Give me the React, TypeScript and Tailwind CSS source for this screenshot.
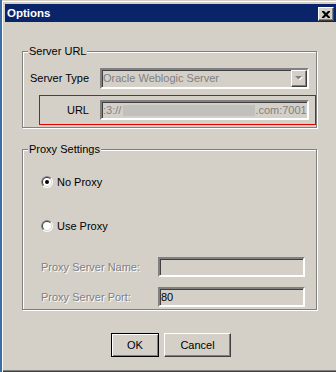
import React from 'react';

function CloseGlyph() {
  return (
    <svg width="8" height="7" viewBox="0 0 8 7" className="block">
      <path d="M0 0h2l2 2 2-2h2v1L5.5 3.5 8 6v1H6L4 5 2 7H0V6l2.5-2.5L0 1z" fill="#000" />
    </svg>
  );
}

function Radio({ checked }: { checked?: boolean }) {
  return (
    <svg width="12" height="12" viewBox="0 0 12 12" className="block shrink-0">
      <defs>
        <clipPath id="radio-tl">
          <polygon points="0,0 12,0 0,12" />
        </clipPath>
      </defs>
      <circle cx="6" cy="6" r="6" fill="#fff" />
      <circle cx="6" cy="6" r="6" fill="#808080" clipPath="url(#radio-tl)" />
      <circle cx="6" cy="6" r="5" fill="#d4d0c8" />
      <circle cx="6" cy="6" r="5" fill="#404040" clipPath="url(#radio-tl)" />
      <circle cx="6" cy="6" r="4" fill="#fff" />
      {checked && <circle cx="6" cy="6" r="2" fill="#000" />}
    </svg>
  );
}

function DropArrow() {
  return (
    <svg width="8" height="5" viewBox="0 0 8 5" className="block">
      <polygon points="1,1 8,1 4.5,4.5" fill="#fff" />
      <polygon points="0,0 7,0 3.5,3.5" fill="#808080" />
    </svg>
  );
}

const sunken =
  'border-2 border-t-[#808080] border-l-[#808080] border-b-white border-r-white bg-[#d4d0c8] shadow-[inset_1px_1px_0_#404040,inset_-1px_-1px_0_#d4d0c8]';

function GroupBox({ title, className, children }: { title: string; className: string; children: React.ReactNode }) {
  return (
    <div className={`relative ml-[17px] w-[295px] border border-[#808080] shadow-[inset_1px_1px_0_#fff,1px_1px_0_#fff] ${className}`}>
      <span className="absolute -top-[7px] left-[5px] bg-[#d4d0c8] px-[1px] leading-[13px]">{title}</span>
      {children}
    </div>
  );
}

export default function App() {
  return (
    <div className="h-[372px] w-[336px] overflow-hidden bg-[#3a6ea5] pl-[2px] font-['Liberation_Sans',Arial,sans-serif] text-[11px] leading-[13px] text-black">
      <div className="flex h-full flex-col bg-[#d4d0c8] pl-[3px] pt-[4px] shadow-[inset_0_1px_0_#d4d0c8,inset_0_2px_0_#fff,inset_1px_0_0_#fff,inset_0_-1px_0_#404040,inset_0_-2px_0_#808080]">
        {/* title bar */}
        <div className="flex h-[18px] items-start justify-between bg-[#0a246a] pl-[2px] pr-[2px]">
          <span className="self-center text-[11.5px] font-bold text-white">Options</span>
          <div className="mt-[3px] flex h-[14px] w-[16px] items-center justify-center border border-t-white border-l-white border-b-[#404040] border-r-[#404040] bg-[#d4d0c8] shadow-[inset_-1px_-1px_0_#808080]">
            <CloseGlyph />
          </div>
        </div>

        {/* Server URL */}
        <GroupBox title="Server URL" className="mt-[29px] h-[77px]">
          <div className="ml-[7px] mt-[16px] flex items-center">
            <span className="w-[70px]">Server Type</span>
            <div className={`flex h-[21px] w-[209px] items-center ${sunken}`}>
              <span className="flex-1 pl-[1px] text-[#808080]">Oracle Weblogic Server</span>
              <div className="flex h-full w-[16px] items-center justify-center border border-t-white border-l-white border-b-[#404040] border-r-[#404040] shadow-[inset_-1px_-1px_0_#808080]">
                <DropArrow />
              </div>
            </div>
          </div>
          <div className="ml-[16px] mt-[6px] flex h-[30px] w-[277px] items-center border border-[#e00000]">
            <span className="w-[60px] pr-[11px] text-right">URL</span>
            <div className={`flex h-[20px] w-[209px] items-center overflow-hidden whitespace-nowrap pl-[1px] text-[#808080] ${sunken}`}>
              <span>:3://</span>
              <span className="ml-[2px] inline-block h-[11px] w-[132px] shrink-0 bg-[#c2c0bc]" />
              <span>.com:7001</span>
            </div>
          </div>
        </GroupBox>

        {/* Proxy Settings */}
        <GroupBox title="Proxy Settings" className="mt-[21px] h-[161px]">
          <div className="ml-[18px] mt-[24px] flex h-[16px] items-center gap-[4px]">
            <Radio checked />
            <span>No Proxy</span>
          </div>
          <div className="ml-[18px] mt-[28px] flex h-[16px] items-center gap-[4px]">
            <Radio />
            <span>Use Proxy</span>
          </div>
          <div className="ml-[18px] mt-[23px] flex h-[20px] items-center">
            <span className="w-[117px] text-[#808080] [text-shadow:1px_1px_0_#fff]">Proxy Server Name:</span>
            <div className={`h-[20px] w-[147px] ${sunken}`} />
          </div>
          <div className="ml-[18px] mt-[10px] flex h-[20px] items-center">
            <span className="w-[117px] text-[#808080] [text-shadow:1px_1px_0_#fff]">Proxy Server Port:</span>
            <div className={`flex h-[20px] w-[147px] items-center pl-[1px] ${sunken}`}>80</div>
          </div>
        </GroupBox>

        {/* buttons */}
        <div className="ml-[106px] mt-[23px] flex gap-[5px]">
          <div className="flex h-[24px] w-[48px] items-center justify-center border border-black shadow-[inset_1px_1px_0_#fff,inset_-1px_-1px_0_#808080]">
            OK
          </div>
          <div className="flex h-[24px] w-[67px] items-center justify-center border border-t-white border-l-white border-b-[#404040] border-r-[#404040] shadow-[inset_-1px_-1px_0_#808080]">
            Cancel
          </div>
        </div>
      </div>
    </div>
  );
}
